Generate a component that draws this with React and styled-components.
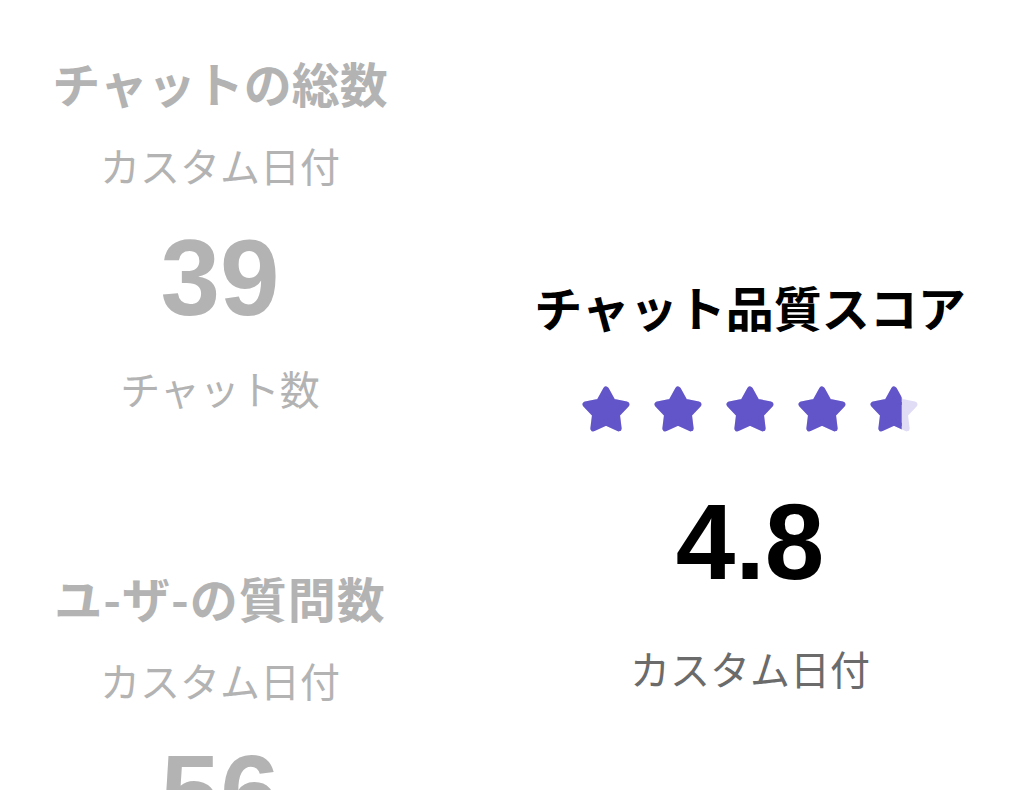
import React from "react";
import styled, { createGlobalStyle } from "styled-components";

const GlobalStyle = createGlobalStyle`
  html, body {
    margin: 0;
    padding: 0;
    background: #ffffff;
    overflow: hidden;
  }
  body {
    font-family: "Noto Sans CJK JP", "Noto Sans", sans-serif;
  }
`;

const Page = styled.div`
  display: grid;
  grid-template-columns: 440px 1fr;
  column-gap: 48px;
  align-items: start;
  width: 1012px;
  height: 790px;
  overflow: hidden;
`;

const LeftColumn = styled.div`
  display: flex;
  flex-direction: column;
  padding-top: 58px;
  gap: 165px;
`;

const RightColumn = styled.div`
  padding-top: 282px;
`;

const Stat = styled.section`
  display: flex;
  flex-direction: column;
  align-items: center;
  color: ${(p) => (p.$muted ? "#b3b3b3" : "#000000")};
`;

const Title = styled.h2`
  margin: 0;
  font-family: "Noto Sans CJK JP", sans-serif;
  font-size: 48px;
  line-height: 48px;
  font-weight: 700;
  letter-spacing: ${(p) => p.$spacing || 0}px;
  white-space: nowrap;
`;

const Caption = styled.div`
  margin-top: ${(p) => p.$top || 0}px;
  font-family: "Noto Sans CJK JP", sans-serif;
  font-size: 40px;
  line-height: 40px;
  font-weight: 400;
  color: ${(p) => p.$color || "inherit"};
  white-space: nowrap;
`;

const BigNumber = styled.div`
  margin-top: ${(p) => p.$top || 0}px;
  font-family: "Liberation Sans", Arial, sans-serif;
  font-size: 107px;
  line-height: 104px;
  font-weight: 700;
`;

const Stars = styled.div`
  display: flex;
  gap: 24px;
  margin-top: 56px;
`;

const StarBox = styled.svg`
  display: block;
  width: 48px;
  height: 48px;
`;

const FILL = "#6255c9";
const EMPTY = "#e0dcf5";

function starPoints(cx, cy, R, r) {
  const pts = [];
  for (let i = 0; i < 10; i++) {
    const a = ((-90 + i * 36) * Math.PI) / 180;
    const rad = i % 2 === 0 ? R : r;
    pts.push(`${(cx + rad * Math.cos(a)).toFixed(2)},${(cy + rad * Math.sin(a)).toFixed(2)}`);
  }
  return pts.join(" ");
}

const POINTS = starPoints(24, 25, 21.5, 11.5);

const Star = ({ id, amount }) => (
  <StarBox viewBox="0 0 48 48">
    <defs>
      <clipPath id={id}>
        <rect x="0" y="0" width={48 * amount} height="48" />
      </clipPath>
    </defs>
    <polygon
      points={POINTS}
      fill={EMPTY}
      stroke={EMPTY}
      strokeWidth="6"
      strokeLinejoin="round"
    />
    <polygon
      points={POINTS}
      fill={FILL}
      stroke={FILL}
      strokeWidth="6"
      strokeLinejoin="round"
      clipPath={`url(#${id})`}
    />
  </StarBox>
);

const Rating = ({ value }) => (
  <Stars>
    {[0, 1, 2, 3, 4].map((i) => {
      const part = Math.max(0, Math.min(1, value - i));
      // the last star's fill ends at about two thirds of its box
      const amount = part >= 1 ? 1 : part > 0 ? 0.66 : 0;
      return <Star key={i} id={`star-clip-${i}`} amount={amount} />;
    })}
  </Stars>
);

const stats = [
  { title: "チャットの総数", value: 39, label: "チャット数" },
  { title: "ユ-ザ-の質問数", value: 56, label: "質問数", spacing: 1 },
];

export default function App() {
  return (
    <>
      <GlobalStyle />
      <Page>
        <LeftColumn>
          {stats.map((s) => (
            <Stat $muted key={s.title}>
              <Title $spacing={s.spacing}>{s.title}</Title>
              <Caption $top={39}>カスタム日付</Caption>
              <BigNumber $top={41}>{s.value}</BigNumber>
              <Caption $top={38}>{s.label}</Caption>
            </Stat>
          ))}
        </LeftColumn>
        <RightColumn>
          <Stat>
            <Title>チャット品質スコア</Title>
            <Rating value={4.8} />
            <BigNumber $top={56}>4.8</BigNumber>
            <Caption $top={54} $color="#6b6b6b">
              カスタム日付
            </Caption>
          </Stat>
        </RightColumn>
      </Page>
    </>
  );
}
